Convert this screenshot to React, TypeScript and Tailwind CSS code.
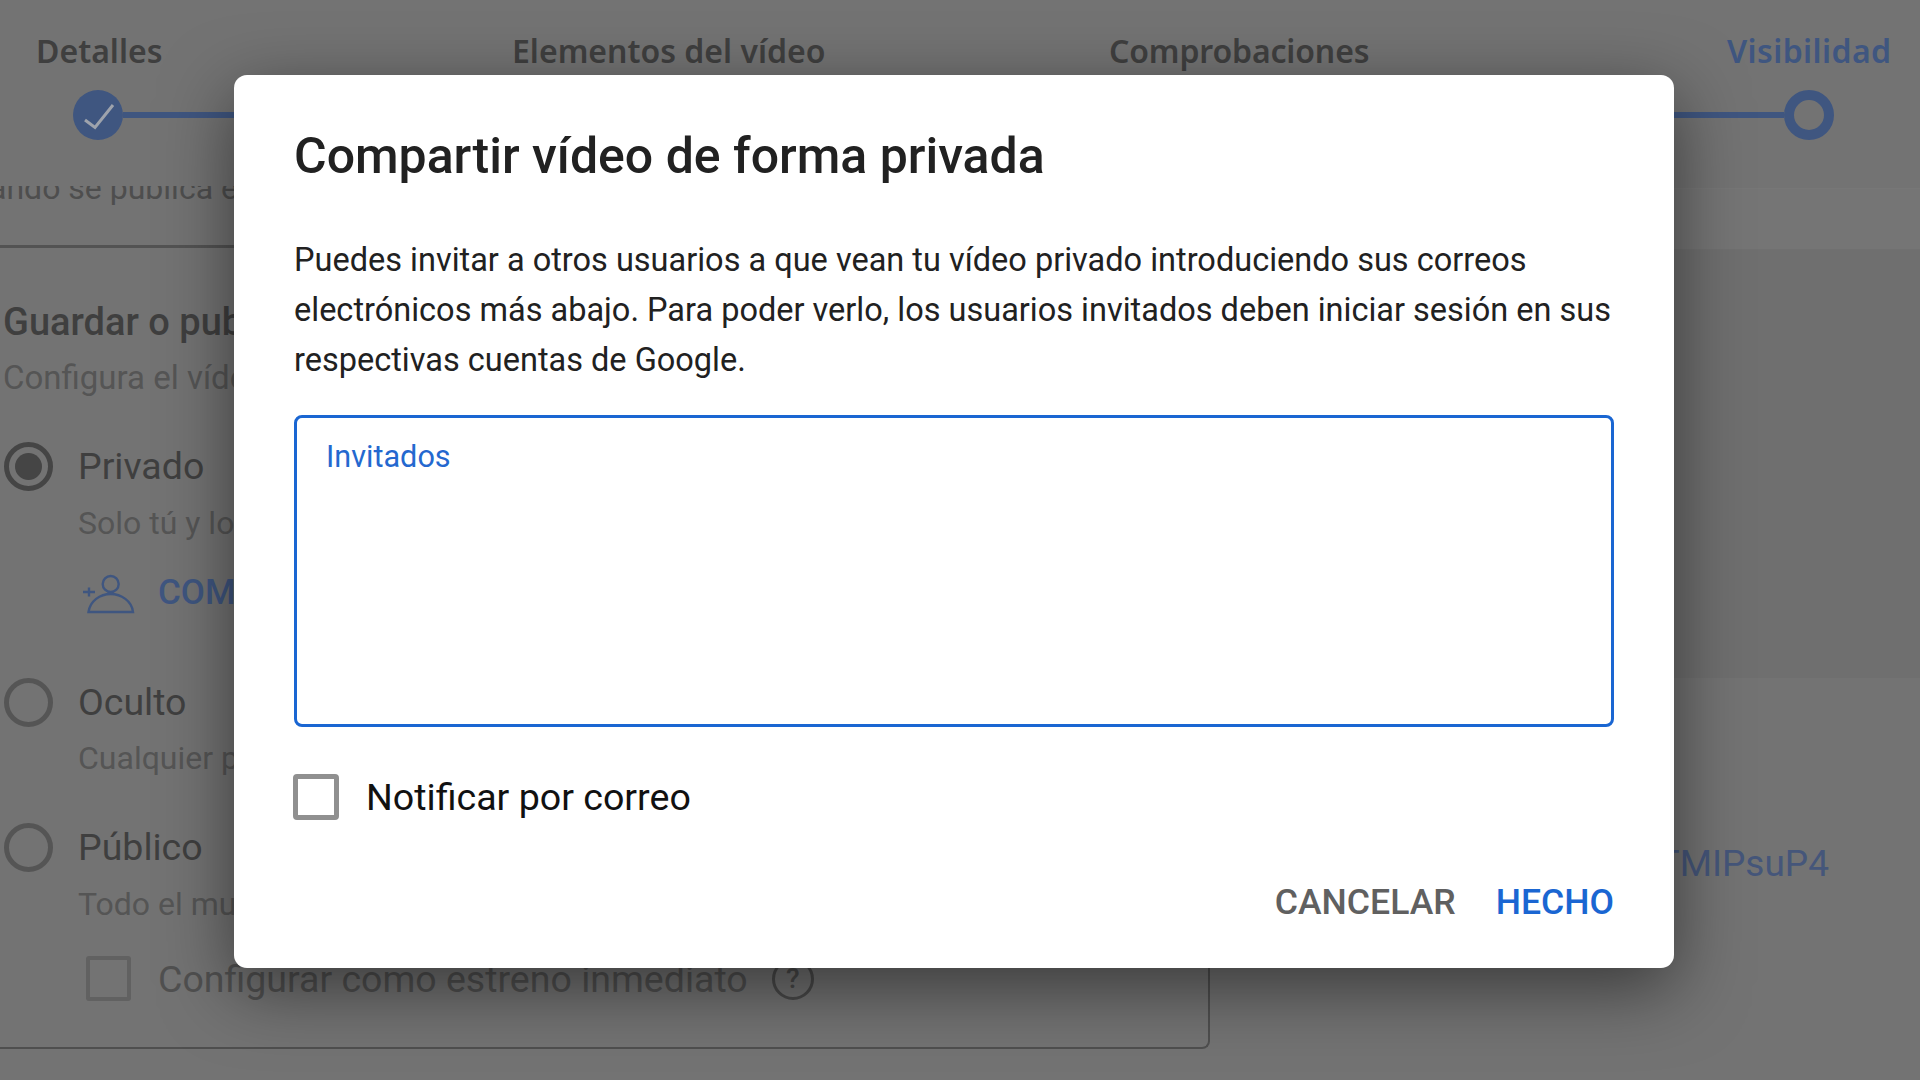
export default function App() {
  const roboto = "font-['Roboto',sans-serif]";
  return (
    <div className={`relative w-[1920px] h-[1080px] overflow-hidden bg-[#737373] ${roboto}`}>
      {/* Stepper */}
      <div className="h-[188px] flex flex-col">
        <div className="h-[90px] flex items-start pt-[29px] font-['Noto_Sans',sans-serif] font-semibold text-[32px] leading-[44px] text-[#3f3f3f] whitespace-nowrap">
          <span className="ml-[36px] w-[476px]">Detalles</span>
          <span className="w-[597px]">Elementos del vídeo</span>
          <span className="w-[618px] tracking-[-0.15px]">Comprobaciones</span>
          <span className="text-[#3f5680] tracking-[0.4px]">Visibilidad</span>
        </div>
        <div className="flex items-center pl-[73px] pr-[86px]">
          <div className="w-[50px] h-[50px] rounded-full bg-[#3f5680] flex items-center justify-center shrink-0">
            <svg width="50" height="50" viewBox="0 0 50 50" fill="none">
              <path d="M12 30 L22 37.5 L40 15" stroke="#9ea3ac" strokeWidth="3" />
            </svg>
          </div>
          <div className="flex-1 h-[6px] bg-[#3f5680]" />
          <div className="w-[50px] h-[50px] rounded-full border-[10px] border-[#3f5680] shrink-0" />
        </div>
      </div>

      {/* Strip under the stepper */}
      <div className="flex h-[62px]">
        <div className="w-[1210px] h-[62px] overflow-hidden border-b-[3px] border-[#535353] text-[32px] leading-[38px] text-[#4e4e4e] -mt-[2px]">
          <div className="-mt-[17px] -ml-[11px] whitespace-nowrap">ando se publica el vídeo</div>
        </div>
        <div className="flex-1 bg-[#757575] border-t border-[#777777] border-b border-b-[#707070]" />
      </div>

      {/* Body */}
      <div className="flex">
        <div className="w-[1210px] h-[799px] border-r-2 border-b-2 border-[#4f4f4f] rounded-br-[8px] pl-[3px] pt-[50px]">
          <div className="text-[38px] leading-[44px] font-medium text-[#3f3f3f] whitespace-nowrap">Guardar o publicar</div>
          <div className="mt-[12px] text-[33px] leading-[44px] text-[#555555] whitespace-nowrap">Configura el vídeo</div>

          <div className="flex mt-[42px]">
            <div className="w-[49px] h-[49px] rounded-full border-[5px] border-[#454545] flex items-center justify-center shrink-0 ml-px">
              <div className="w-[27px] h-[27px] rounded-full bg-[#454545]" />
            </div>
            <div className="ml-[25px] pt-[2px]">
              <div className="text-[37.5px] leading-[44px] text-[#3f3f3f]">Privado</div>
              <div className="mt-[13px] text-[32px] leading-[44px] text-[#555555] whitespace-nowrap">Solo tú y los</div>
              <div className="flex items-center mt-[26px] ml-[3px]">
                <svg width="54" height="44" viewBox="0 0 54 44" fill="none" stroke="#3f5680" strokeWidth="2.4">
                  <circle cx="29.7" cy="13" r="8" />
                  <path d="M7.5 41 C9 30 19 23 29.7 23 C40 23 51 30 52 41 Z" />
                  <path d="M2 21 H14 M8 16.5 V25.5" />
                </svg>
                <span className="ml-[23px] text-[35px] leading-[44px] font-medium text-[#3f5680]">COMPARTIR</span>
              </div>
            </div>
          </div>

          <div className="flex mt-[63px]">
            <div className="w-[49px] h-[49px] rounded-full border-[5px] border-[#555555] shrink-0 ml-px" />
            <div className="ml-[25px] pt-[1px]">
              <div className="text-[37.5px] leading-[46px] text-[#3f3f3f]">Oculto</div>
              <div className="mt-[11px] text-[32px] leading-[44px] text-[#555555] whitespace-nowrap">Cualquier persona</div>
            </div>
          </div>

          <div className="flex mt-[43px]">
            <div className="w-[49px] h-[49px] rounded-full border-[5px] border-[#555555] shrink-0 ml-px" />
            <div className="ml-[25px] pt-[1px]">
              <div className="text-[37.5px] leading-[46px] text-[#3f3f3f]">Público</div>
              <div className="mt-[12px] text-[32px] leading-[44px] text-[#555555] whitespace-nowrap">Todo el mundo</div>
            </div>
          </div>

          <div className="flex items-center mt-[30px] ml-[83px]">
            <div className="w-[45px] h-[45px] rounded-[3px] border-[4px] border-[#616161] shrink-0" />
            <span className="ml-[27px] text-[37.5px] leading-[44px] text-[#505050] whitespace-nowrap">Configurar como estreno inmediato</span>
            <div className="ml-[24px] w-[42px] h-[42px] rounded-full border-[3px] border-[#4a4a4a] flex items-center justify-center text-[28px] font-medium text-[#4a4a4a]">?</div>
          </div>
        </div>

        <div className="flex-1">
          <div className="h-[428px] bg-[#6f6f6f]" />
          <div className="pt-[163px] flex justify-end pr-[91px]">
            <span className="text-[37px] leading-[46px] text-[#45567a] whitespace-nowrap">youtu.be/TMIPsuP4</span>
          </div>
        </div>
      </div>

      {/* Dialog */}
      <div className="absolute left-[234px] top-[75px] w-[1440px] h-[893px] bg-white rounded-[13px] shadow-[0_20px_70px_rgba(0,0,0,0.5)] px-[60px] pt-[48px] flex flex-col">
        <h1 className="text-[50px] leading-[66px] font-medium text-[#212121] whitespace-nowrap">Compartir vídeo de forma privada</h1>
        <p className="mt-[46px] text-[32.5px] leading-[50px] text-[#212121]">
          Puedes invitar a otros usuarios a que vean tu vídeo privado introduciendo sus correos electrónicos más abajo. Para poder verlo, los usuarios invitados deben iniciar sesión en sus respectivas cuentas de Google.
        </p>
        <div className="mt-[30px] h-[312px] rounded-[8px] border-[3px] border-[#1a66d2] px-[29px] pt-[21px]">
          <span className="block text-[30.6px] leading-[36px] text-[#2468cf]">Invitados</span>
        </div>
        <div className="mt-[47px] flex items-center -ml-px">
          <div className="w-[46px] h-[46px] rounded-[4px] border-[5px] border-[#909090] shrink-0" />
          <span className="ml-[27px] text-[37.6px] leading-[46px] text-[#111111]">Notificar por correo</span>
        </div>
        <div className="mt-[60px] flex justify-end items-center gap-[40px] text-[35.6px] leading-[44px] font-medium">
          <span className="text-[#606060]">CANCELAR</span>
          <span className="text-[#1a66d2]">HECHO</span>
        </div>
      </div>
    </div>
  );
}
